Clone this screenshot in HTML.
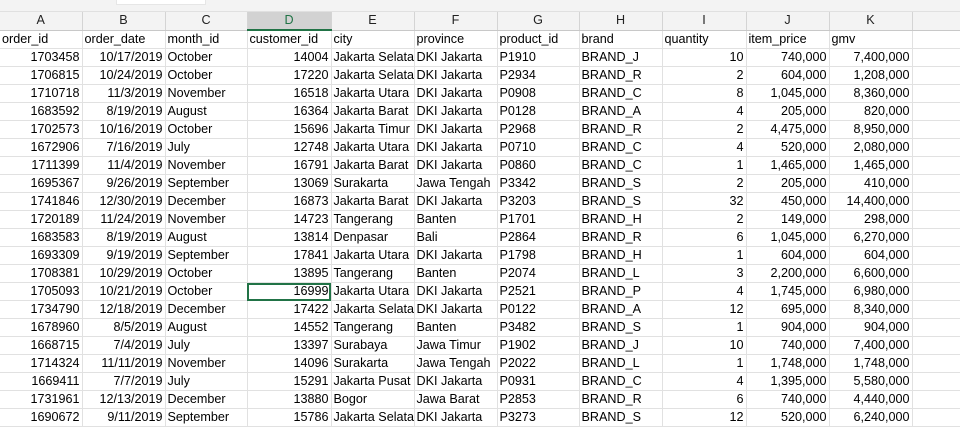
<!DOCTYPE html><html><head><style>
body{margin:0;width:960px;height:424px;overflow:hidden;background:#fff;font-family:"Liberation Sans",sans-serif;font-size:12.6px;color:#000;position:relative}
.top{position:absolute;left:0;top:0;width:960px;height:11px;background:#f3f3f3;border-bottom:1px solid #e0e0e0}
.tab{position:absolute;left:116px;top:0;width:88px;height:4px;background:#fff;border:1px solid #e6e6e6;border-top:none}
table{position:absolute;left:0;top:12px;border-collapse:collapse;table-layout:fixed;width:960px}
td{height:17px;border-right:1px solid #e1e1e1;border-bottom:1px solid #e1e1e1;padding:0 2px;white-space:nowrap;overflow:hidden;line-height:17px}
tr.h td{background:#f3f3f3;text-align:center;color:#222;border-right:1px solid #d4d4d4;border-bottom:1px solid #c8c8c8}
tr.h td.sel{background:#d2d2d2;color:#217346;border-bottom:2px solid #217346}
.r{text-align:right}
.selc{outline:2px solid #217346;outline-offset:-2px}
</style></head><body>
<div class="top"><div class="tab"></div></div>
<table>
<colgroup><col style="width:82px"><col style="width:83px"><col style="width:82px"><col style="width:84px"><col style="width:83px"><col style="width:83px"><col style="width:82px"><col style="width:83px"><col style="width:84px"><col style="width:83px"><col style="width:83px"><col style="width:48px"></colgroup>
<tr class="h"><td>A</td><td>B</td><td>C</td><td class="sel">D</td><td>E</td><td>F</td><td>G</td><td>H</td><td>I</td><td>J</td><td>K</td><td></td></tr>
<tr><td>order_id</td><td>order_date</td><td>month_id</td><td>customer_id</td><td>city</td><td>province</td><td>product_id</td><td>brand</td><td>quantity</td><td>item_price</td><td>gmv</td><td></td></tr>
<tr><td class="r">1703458</td><td class="r">10/17/2019</td><td>October</td><td class="r">14004</td><td>Jakarta Selatan</td><td>DKI Jakarta</td><td>P1910</td><td>BRAND_J</td><td class="r">10</td><td class="r">740,000</td><td class="r">7,400,000</td><td></td></tr>
<tr><td class="r">1706815</td><td class="r">10/24/2019</td><td>October</td><td class="r">17220</td><td>Jakarta Selatan</td><td>DKI Jakarta</td><td>P2934</td><td>BRAND_R</td><td class="r">2</td><td class="r">604,000</td><td class="r">1,208,000</td><td></td></tr>
<tr><td class="r">1710718</td><td class="r">11/3/2019</td><td>November</td><td class="r">16518</td><td>Jakarta Utara</td><td>DKI Jakarta</td><td>P0908</td><td>BRAND_C</td><td class="r">8</td><td class="r">1,045,000</td><td class="r">8,360,000</td><td></td></tr>
<tr><td class="r">1683592</td><td class="r">8/19/2019</td><td>August</td><td class="r">16364</td><td>Jakarta Barat</td><td>DKI Jakarta</td><td>P0128</td><td>BRAND_A</td><td class="r">4</td><td class="r">205,000</td><td class="r">820,000</td><td></td></tr>
<tr><td class="r">1702573</td><td class="r">10/16/2019</td><td>October</td><td class="r">15696</td><td>Jakarta Timur</td><td>DKI Jakarta</td><td>P2968</td><td>BRAND_R</td><td class="r">2</td><td class="r">4,475,000</td><td class="r">8,950,000</td><td></td></tr>
<tr><td class="r">1672906</td><td class="r">7/16/2019</td><td>July</td><td class="r">12748</td><td>Jakarta Utara</td><td>DKI Jakarta</td><td>P0710</td><td>BRAND_C</td><td class="r">4</td><td class="r">520,000</td><td class="r">2,080,000</td><td></td></tr>
<tr><td class="r">1711399</td><td class="r">11/4/2019</td><td>November</td><td class="r">16791</td><td>Jakarta Barat</td><td>DKI Jakarta</td><td>P0860</td><td>BRAND_C</td><td class="r">1</td><td class="r">1,465,000</td><td class="r">1,465,000</td><td></td></tr>
<tr><td class="r">1695367</td><td class="r">9/26/2019</td><td>September</td><td class="r">13069</td><td>Surakarta</td><td>Jawa Tengah</td><td>P3342</td><td>BRAND_S</td><td class="r">2</td><td class="r">205,000</td><td class="r">410,000</td><td></td></tr>
<tr><td class="r">1741846</td><td class="r">12/30/2019</td><td>December</td><td class="r">16873</td><td>Jakarta Barat</td><td>DKI Jakarta</td><td>P3203</td><td>BRAND_S</td><td class="r">32</td><td class="r">450,000</td><td class="r">14,400,000</td><td></td></tr>
<tr><td class="r">1720189</td><td class="r">11/24/2019</td><td>November</td><td class="r">14723</td><td>Tangerang</td><td>Banten</td><td>P1701</td><td>BRAND_H</td><td class="r">2</td><td class="r">149,000</td><td class="r">298,000</td><td></td></tr>
<tr><td class="r">1683583</td><td class="r">8/19/2019</td><td>August</td><td class="r">13814</td><td>Denpasar</td><td>Bali</td><td>P2864</td><td>BRAND_R</td><td class="r">6</td><td class="r">1,045,000</td><td class="r">6,270,000</td><td></td></tr>
<tr><td class="r">1693309</td><td class="r">9/19/2019</td><td>September</td><td class="r">17841</td><td>Jakarta Utara</td><td>DKI Jakarta</td><td>P1798</td><td>BRAND_H</td><td class="r">1</td><td class="r">604,000</td><td class="r">604,000</td><td></td></tr>
<tr><td class="r">1708381</td><td class="r">10/29/2019</td><td>October</td><td class="r">13895</td><td>Tangerang</td><td>Banten</td><td>P2074</td><td>BRAND_L</td><td class="r">3</td><td class="r">2,200,000</td><td class="r">6,600,000</td><td></td></tr>
<tr><td class="r">1705093</td><td class="r">10/21/2019</td><td>October</td><td class="r selc">16999</td><td>Jakarta Utara</td><td>DKI Jakarta</td><td>P2521</td><td>BRAND_P</td><td class="r">4</td><td class="r">1,745,000</td><td class="r">6,980,000</td><td></td></tr>
<tr><td class="r">1734790</td><td class="r">12/18/2019</td><td>December</td><td class="r">17422</td><td>Jakarta Selatan</td><td>DKI Jakarta</td><td>P0122</td><td>BRAND_A</td><td class="r">12</td><td class="r">695,000</td><td class="r">8,340,000</td><td></td></tr>
<tr><td class="r">1678960</td><td class="r">8/5/2019</td><td>August</td><td class="r">14552</td><td>Tangerang</td><td>Banten</td><td>P3482</td><td>BRAND_S</td><td class="r">1</td><td class="r">904,000</td><td class="r">904,000</td><td></td></tr>
<tr><td class="r">1668715</td><td class="r">7/4/2019</td><td>July</td><td class="r">13397</td><td>Surabaya</td><td>Jawa Timur</td><td>P1902</td><td>BRAND_J</td><td class="r">10</td><td class="r">740,000</td><td class="r">7,400,000</td><td></td></tr>
<tr><td class="r">1714324</td><td class="r">11/11/2019</td><td>November</td><td class="r">14096</td><td>Surakarta</td><td>Jawa Tengah</td><td>P2022</td><td>BRAND_L</td><td class="r">1</td><td class="r">1,748,000</td><td class="r">1,748,000</td><td></td></tr>
<tr><td class="r">1669411</td><td class="r">7/7/2019</td><td>July</td><td class="r">15291</td><td>Jakarta Pusat</td><td>DKI Jakarta</td><td>P0931</td><td>BRAND_C</td><td class="r">4</td><td class="r">1,395,000</td><td class="r">5,580,000</td><td></td></tr>
<tr><td class="r">1731961</td><td class="r">12/13/2019</td><td>December</td><td class="r">13880</td><td>Bogor</td><td>Jawa Barat</td><td>P2853</td><td>BRAND_R</td><td class="r">6</td><td class="r">740,000</td><td class="r">4,440,000</td><td></td></tr>
<tr><td class="r">1690672</td><td class="r">9/11/2019</td><td>September</td><td class="r">15786</td><td>Jakarta Selatan</td><td>DKI Jakarta</td><td>P3273</td><td>BRAND_S</td><td class="r">12</td><td class="r">520,000</td><td class="r">6,240,000</td><td></td></tr>
</table>
</body></html>
